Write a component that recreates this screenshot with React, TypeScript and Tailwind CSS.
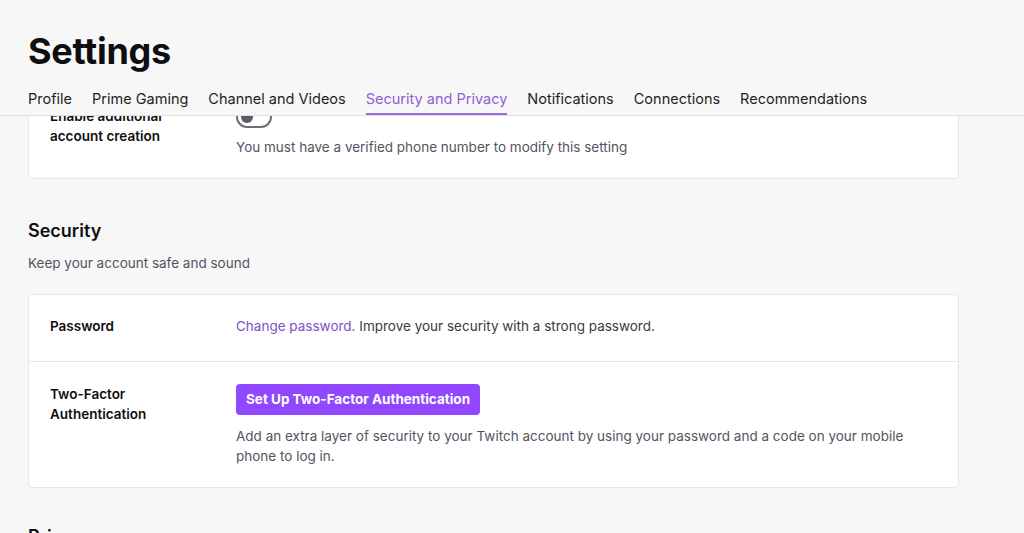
import React from "react";

const tabs = [
  "Profile",
  "Prime Gaming",
  "Channel and Videos",
  "Security and Privacy",
  "Notifications",
  "Connections",
  "Recommendations",
];

const font = { fontFamily: "Inter, 'Noto Sans', sans-serif" };

function Toggle() {
  return (
    <div className="relative h-[22px] w-[36px] rounded-full border-2 border-[#6e6e75] bg-white">
      <div className="absolute left-[3px] top-[3px] h-[12px] w-[12px] rounded-full bg-[#5c5c63]" />
    </div>
  );
}

export default function App() {
  return (
    <div
      className="flex h-[533px] w-[1024px] flex-col overflow-hidden bg-[#f7f7f8] text-[#0e0e10]"
      style={font}
    >
      {/* Page header with tab navigation */}
      <header className="shrink-0 border-b border-[#dedee3] px-[28px] pt-[28px]">
        <h1 className="text-[36px] font-bold leading-[46px] tracking-[-0.3px]">Settings</h1>
        <nav className="mt-[14px] flex gap-[20px]">
          {tabs.map((t) => (
            <div
              key={t}
              className={
                t === "Security and Privacy"
                  ? "border-b-2 border-[#9a6ad8] pb-[3px] text-[14.5px] leading-[22px] text-[#8e5fd6]"
                  : "border-b-2 border-transparent pb-[3px] text-[14.5px] leading-[22px] text-[#1f1f23]"
              }
            >
              {t}
            </div>
          ))}
        </nav>
      </header>

      {/* Scrolled settings content */}
      <div className="flex-1 overflow-hidden">
        <div className="-mt-[30px] w-[959px] pl-[28px] text-[13.5px]">
          <section className="rounded-[4px] border border-[#e6e6ea] bg-white">
            <div className="flex px-[21px] pb-[21px] pt-[19px]">
              <div className="w-[186px] shrink-0 font-semibold leading-[20px]">
                Enable additional
                <br />
                account creation
              </div>
              <div className="flex flex-col">
                <Toggle />
                <p className="mt-[9px] leading-[20px] text-[#53535f]">
                  You must have a verified phone number to modify this setting
                </p>
              </div>
            </div>
          </section>

          <h2 className="mt-[40px] text-[18px] font-semibold leading-[24px]">Security</h2>
          <p className="mt-[10px] leading-[20px] text-[#53535f]">Keep your account safe and sound</p>

          <section className="mt-[21px] rounded-[4px] border border-[#e6e6ea] bg-white">
            <div className="flex h-[67px] items-start border-b border-[#e6e6ea] px-[21px] pt-[21px]">
              <div className="w-[186px] shrink-0 font-semibold leading-[20px]">Password</div>
              <p className="leading-[20px] text-[#53535f]">
                <span className="text-[#7d4fc9]">Change password.</span>{" "}
                <span className="text-[#3a3a40]">Improve your security with a strong password.</span>
              </p>
            </div>
            <div className="flex px-[21px] pb-[21px] pt-[22px]">
              <div className="w-[186px] shrink-0 font-semibold leading-[20px]">
                Two-Factor
                <br />
                Authentication
              </div>
              <div className="flex flex-1 flex-col items-start">
                <button className="h-[31px] rounded-[4px] bg-[#9147ff] px-[10px] text-[13.5px] font-bold text-white">
                  Set Up Two-Factor Authentication
                </button>
                <p className="mt-[11px] w-[680px] leading-[20px] text-[#53535f]">
                  Add an extra layer of security to your Twitch account by using your password and a code on your
                  mobile phone to log in.
                </p>
              </div>
            </div>
          </section>

          <h2 className="mt-[37px] text-[18px] font-semibold leading-[24px]">Privacy</h2>
        </div>
      </div>
    </div>
  );
}
